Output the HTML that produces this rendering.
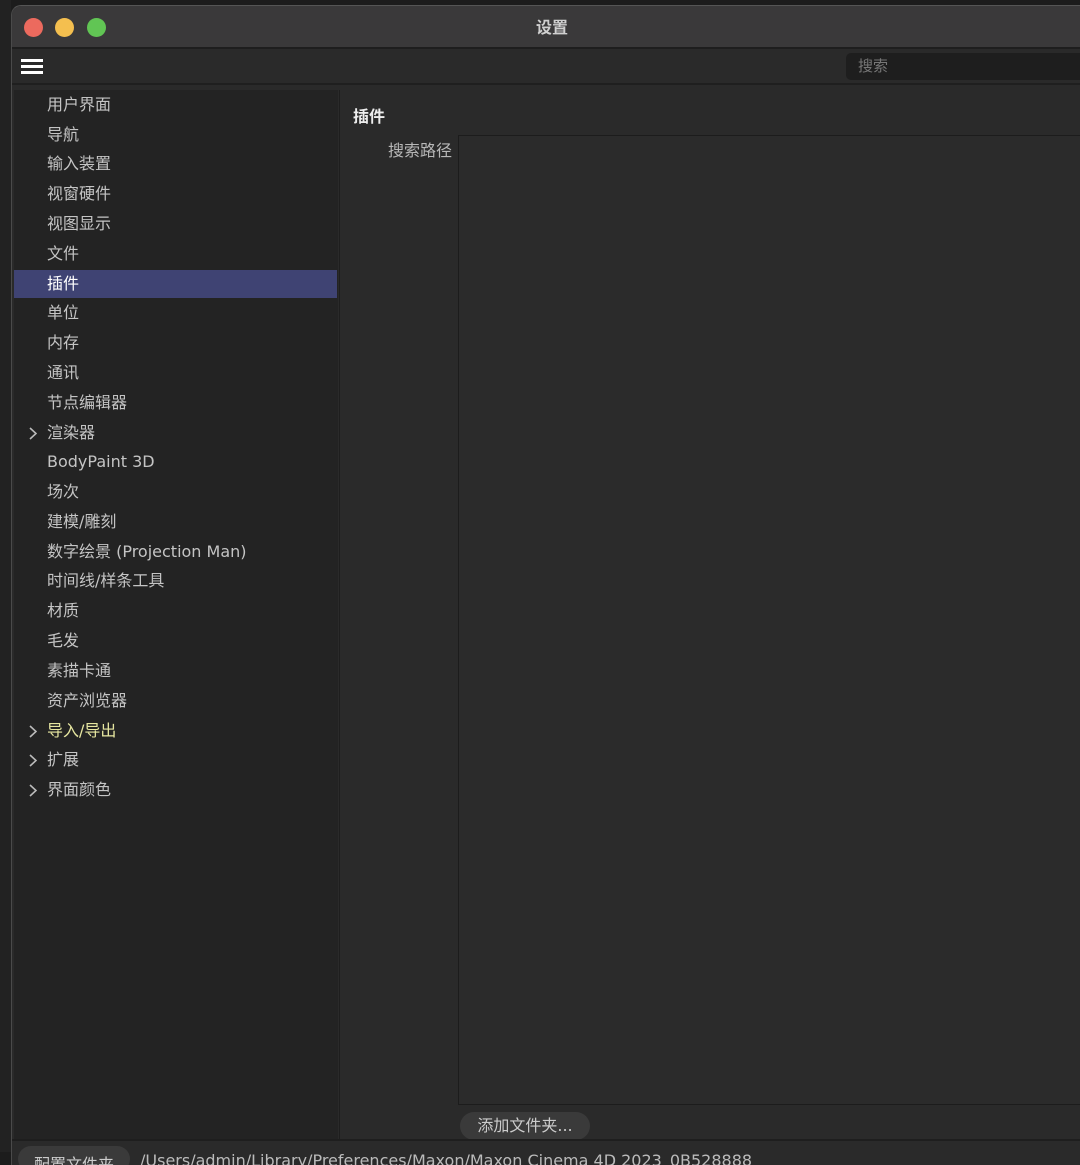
<!DOCTYPE html>
<html><head><meta charset="utf-8">
<style>
*{margin:0;padding:0;box-sizing:border-box}
body{width:1080px;height:1152px;overflow:hidden;background:#1c1c1c;font-family:"DejaVu Sans","Noto Sans CJK SC",sans-serif;position:relative}
.abs{position:absolute}
.win{left:11px;top:5px;width:1080px;height:1160px;background:#2a2a2a;border-radius:10px 0 0 0;border-left:1px solid #4a4a4a;border-top:1px solid #555;overflow:hidden}
.title{left:0;top:0;width:100%;height:43px;background:#3a393a;border-bottom:2px solid #1e1e1e}
.dot{top:12px;width:19px;height:19px;border-radius:50%}
.tb{left:0;top:45px;width:100%;height:34px;background:#2a2a2a;border-bottom:2px solid #1f1f1f}
.side{left:2px;top:84px;width:324px;height:1050px;background:#232323}
.item{position:absolute;left:35px;height:30px;line-height:30px;font-size:16px;color:#c4c4c4;white-space:nowrap}
.chev{position:absolute;left:-18px;top:9px;width:8px;height:13px}
</style></head><body>
<div class="abs" style="left:0;top:0;width:11px;height:1152px;background:#222"></div>
<div class="abs win">
  <div class="abs title">
    <div class="abs dot" style="left:12px;background:#ec6a5e"></div>
    <div class="abs dot" style="left:43px;background:#f4bf4f"></div>
    <div class="abs dot" style="left:75px;background:#61c554"></div>
    <div class="abs" style="left:0;width:1080px;top:8px;text-align:center;color:#d0d0d0;font-size:16px;font-weight:bold">设置</div>
  </div>
  <div class="abs tb">
    <div class="abs" style="left:9px;top:8px;width:22px;height:3px;background:#fff"></div>
    <div class="abs" style="left:9px;top:14px;width:22px;height:3px;background:#fff"></div>
    <div class="abs" style="left:9px;top:20px;width:22px;height:3px;background:#fff"></div>
    <div class="abs" style="left:834px;top:2px;width:260px;height:27px;background:#1e1e1e;border-radius:5px;color:#777;font-size:15px;line-height:27px;padding-left:12px">搜索</div>
  </div>
  <div class="abs side">
    <div class="abs" style="left:0;top:180px;width:323px;height:28px;background:#3f4373"></div>
  </div>
  <div class="abs" style="left:327px;top:84px;width:1px;height:1050px;background:#1e1e1e"></div>
  <div class="abs" style="left:0;top:84px">
    <div class="item" style="top:0">用户界面</div>
    <div class="item" style="top:30px">导航</div>
    <div class="item" style="top:59px">输入装置</div>
    <div class="item" style="top:89px">视窗硬件</div>
    <div class="item" style="top:119px">视图显示</div>
    <div class="item" style="top:149px">文件</div>
    <div class="item" style="top:179px;color:#fff">插件</div>
    <div class="item" style="top:208px">单位</div>
    <div class="item" style="top:238px">内存</div>
    <div class="item" style="top:268px">通讯</div>
    <div class="item" style="top:298px">节点编辑器</div>
    <div class="item" style="top:328px"><svg class="chev" viewBox="0 0 8 13"><path d="M1 1 L7 6.5 L1 12" fill="none" stroke="#bbb" stroke-width="1.6"/></svg>渲染器</div>
    <div class="item" style="top:357px">BodyPaint 3D</div>
    <div class="item" style="top:387px">场次</div>
    <div class="item" style="top:417px">建模/雕刻</div>
    <div class="item" style="top:447px">数字绘景 (Projection Man)</div>
    <div class="item" style="top:476px">时间线/样条工具</div>
    <div class="item" style="top:506px">材质</div>
    <div class="item" style="top:536px">毛发</div>
    <div class="item" style="top:566px">素描卡通</div>
    <div class="item" style="top:596px">资产浏览器</div>
    <div class="item" style="top:626px;color:#e6e6a0"><svg class="chev" viewBox="0 0 8 13"><path d="M1 1 L7 6.5 L1 12" fill="none" stroke="#bbb" stroke-width="1.6"/></svg>导入/导出</div>
    <div class="item" style="top:655px"><svg class="chev" viewBox="0 0 8 13"><path d="M1 1 L7 6.5 L1 12" fill="none" stroke="#bbb" stroke-width="1.6"/></svg>扩展</div>
    <div class="item" style="top:685px"><svg class="chev" viewBox="0 0 8 13"><path d="M1 1 L7 6.5 L1 12" fill="none" stroke="#bbb" stroke-width="1.6"/></svg>界面颜色</div>
  </div>
  <div class="abs" style="left:341px;top:97px;color:#eee;font-size:16px;font-weight:bold">插件</div>
  <div class="abs" style="left:376px;top:131px;color:#b8b8b8;font-size:16px">搜索路径</div>
  <div class="abs" style="left:446px;top:129px;width:700px;height:970px;background:#2b2b2b;border:1px solid #1c1c1c"></div>
  <div class="abs" style="left:448px;top:1106px;width:130px;height:28px;background:#3a3a3a;border-radius:14px;color:#ccc;font-size:16px;line-height:28px;text-align:center">添加文件夹...</div>
  <div class="abs" style="left:0;top:1133px;width:100%;height:2px;background:#1e1e1e"></div>
  <div class="abs" style="left:6px;top:1140px;width:112px;height:26px;background:#3a3a3a;border-radius:13px;color:#ccc;font-size:16px;line-height:26px;padding-left:16px;padding-top:6px">配置文件夹</div>
  <div class="abs" style="left:128px;top:1145px;color:#bbb;font-size:16px;white-space:nowrap">/Users/admin/Library/Preferences/Maxon/Maxon Cinema 4D 2023_0B528888</div>
</div>
</body></html>
